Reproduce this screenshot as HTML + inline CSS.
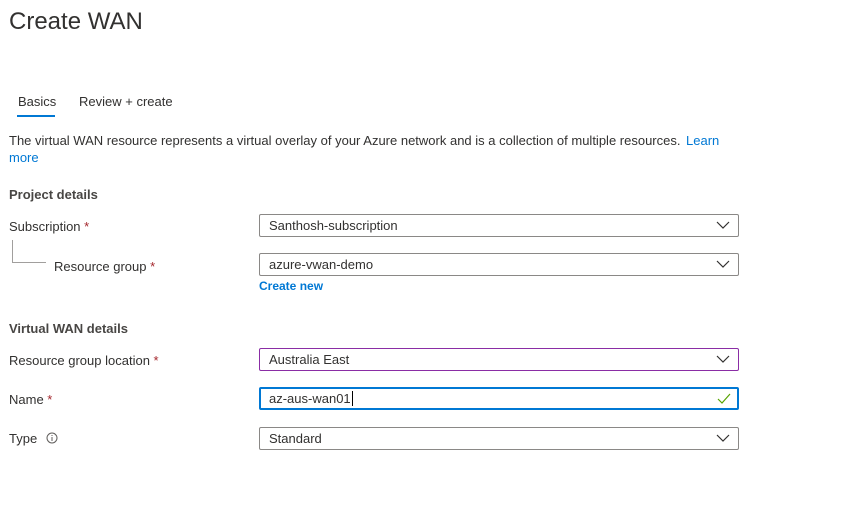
<!DOCTYPE html>
<html><head><style>
body{margin:0;width:848px;height:525px;background:#fff;font-family:"Liberation Sans",sans-serif;color:#323130;position:relative;overflow:hidden}
.a{position:absolute;white-space:nowrap}
.lbl{font-size:13px}
.st{color:#a4262c}
.box{position:absolute;left:259px;width:478px;height:21px;border:1px solid #8a8886;border-radius:2px;font-size:13px;line-height:21px;text-indent:9px;box-sizing:content-box}
.chev{position:absolute;right:8px;top:6px}
</style></head><body>
<div class="a" style="left:9px;top:8px;font-size:24px;">Create WAN</div>
<div class="a" style="left:18px;top:94px;font-size:13px;">Basics</div>
<div class="a" style="left:17px;top:115px;width:38px;height:2px;background:#0078d4"></div>
<div class="a" style="left:79px;top:94px;font-size:13px;">Review + create</div>
<div class="a" style="left:9px;top:133px;font-size:13px;">The virtual WAN resource represents a virtual overlay of your Azure network and is a collection of multiple resources.</div>
<div class="a" style="left:686px;top:133px;font-size:13px;color:#0078d4">Learn</div>
<div class="a" style="left:9px;top:150px;font-size:13px;color:#0078d4">more</div>
<div class="a" style="left:9px;top:187px;font-size:13px;font-weight:bold;color:#484644">Project details</div>
<div class="a lbl" style="left:9px;top:219px;">Subscription <span class="st">*</span></div>
<div class="a" style="left:12px;top:240px;width:33px;height:22px;border-left:1px solid #a19f9d;border-bottom:1px solid #a19f9d"></div>
<div class="a lbl" style="left:54px;top:259px;">Resource group <span class="st">*</span></div>
<div class="box" style="top:214px">Santhosh-subscription<svg class="chev" width="14" height="9"><path d="M1 1l6 6 6-6" fill="none" stroke="#323130" stroke-width="1.2"/></svg></div>
<div class="box" style="top:253px">azure-vwan-demo<svg class="chev" width="14" height="9"><path d="M1 1l6 6 6-6" fill="none" stroke="#323130" stroke-width="1.2"/></svg></div>
<div class="a" style="left:259px;top:279px;font-size:12px;color:#0078d4;font-weight:bold">Create new</div>
<div class="a" style="left:9px;top:321px;font-size:13px;font-weight:bold;color:#484644">Virtual WAN details</div>
<div class="a lbl" style="left:9px;top:353px;">Resource group location <span class="st">*</span></div>
<div class="box" style="top:348px;border-color:#8a2da5">Australia East<svg class="chev" width="14" height="9"><path d="M1 1l6 6 6-6" fill="none" stroke="#323130" stroke-width="1.2"/></svg></div>
<div class="a lbl" style="left:9px;top:392px;">Name <span class="st">*</span></div>
<div class="box" style="top:387px;border:2px solid #0078d4;width:476px;height:19px;line-height:19px;text-indent:8px">az-aus-wan01<span style="display:inline-block;width:1px;height:15px;background:#000;vertical-align:-3px;margin-left:1px"></span><svg style="position:absolute;right:6px;top:4px" width="14" height="11"><path d="M1 6l4 4 8-9" fill="none" stroke="#57a300" stroke-width="1.2"/></svg></div>
<div class="a lbl" style="left:9px;top:431px;">Type</div>
<svg class="a" style="left:46px;top:432px" width="12" height="12"><circle cx="6" cy="6" r="5" fill="none" stroke="#605e5c"/><path d="M6 5v4M6 3v1" stroke="#605e5c"/></svg>
<div class="box" style="top:427px">Standard<svg class="chev" width="14" height="9"><path d="M1 1l6 6 6-6" fill="none" stroke="#323130" stroke-width="1.2"/></svg></div>
</body></html>
